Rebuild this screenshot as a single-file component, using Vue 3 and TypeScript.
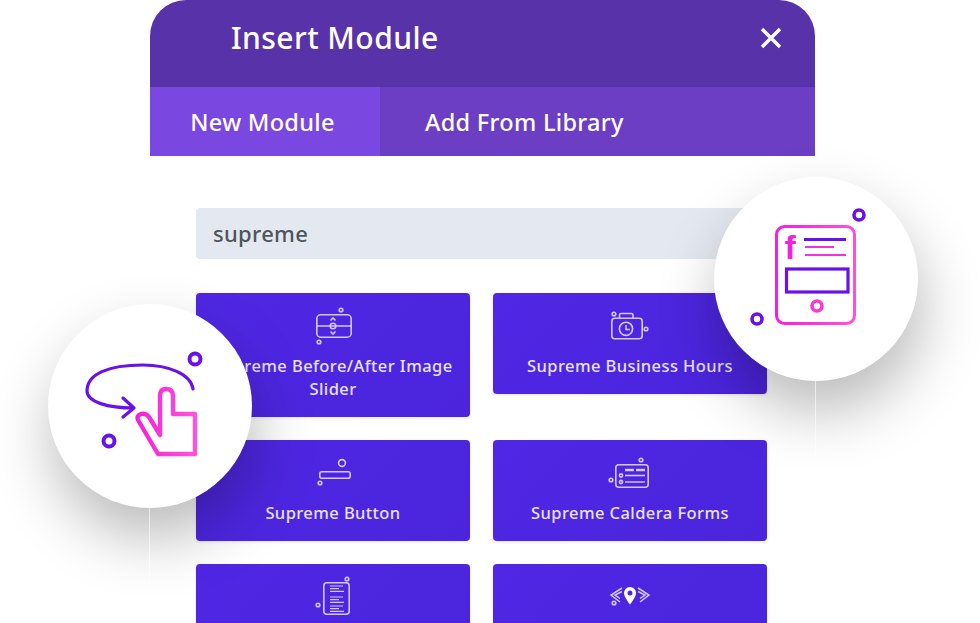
<script setup lang="ts">
interface ModuleCard {
  name: string;
  icon: string;
}

// the last row is cut by the bottom of the picture, so no label shows there
const modules: ModuleCard[] = [
  { name: 'Supreme Before/After Image Slider', icon: 'slider' },
  { name: 'Supreme Business Hours', icon: 'hours' },
  { name: 'Supreme Button', icon: 'button' },
  { name: 'Supreme Caldera Forms', icon: 'forms' },
  { name: '', icon: 'doc' },
  { name: '', icon: 'code' },
];
</script>

<template>
  <div class="page">
    <div class="window">
      <header class="head">
        <h1 class="title">Insert Module</h1>
        <svg class="close" width="24" height="24" viewBox="0 0 24 24">
          <path d="M3 3L21 21M21 3L3 21" stroke="#fff" stroke-width="3.400" fill="none" />
        </svg>
      </header>
      <nav class="tabs">
        <div class="tab active">New Module</div>
        <div class="tab">Add From Library</div>
      </nav>
      <div class="content">
        <div class="search">supreme</div>
        <div class="grid">
          <div v-for="m in modules" :key="m.icon" class="card">
            <svg class="ico" width="60" height="46" viewBox="0 0 60 46" fill="none" stroke="#d4c8fa" stroke-width="1.600">
              <template v-if="m.icon === 'slider'">
                <circle cx="38" cy="4" r="1.800" />
                <circle cx="16" cy="36" r="1.800" />
                <rect x="13.800" y="8.800" width="34.400" height="22.400" rx="4" />
                <path d="M14 20H48" />
                <path d="M27.500 14.500l2.500-2.500 2.500 2.500M27.500 25.500l2.500 2.500 2.500-2.500" />
                <circle cx="30" cy="20" r="2.800" />
              </template>
              <template v-else-if="m.icon === 'hours'">
                <circle cx="14" cy="8" r="1.800" />
                <circle cx="46" cy="23" r="1.800" />
                <path d="M19.500 12V9A1.500 1.500 0 0 1 21 7.500H31.500A1.500 1.500 0 0 1 33 9V12" />
                <rect x="11.800" y="12.300" width="30.400" height="20.400" rx="3" />
                <circle cx="26" cy="22.800" r="6.600" />
                <path d="M26 19V23.500H30" />
              </template>
              <template v-else-if="m.icon === 'button'">
                <circle cx="39" cy="10" r="3.400" />
                <rect x="16.800" y="18.800" width="30.400" height="6.400" rx="2" />
                <circle cx="17" cy="30" r="1.800" />
              </template>
              <template v-else-if="m.icon === 'forms'">
                <circle cx="41" cy="7" r="1.800" />
                <circle cx="11" cy="27" r="1.800" />
                <rect x="15.800" y="11.800" width="32.400" height="22.400" rx="3" />
                <path d="M25 17H34M36 17H45" stroke-width="2.400" />
                <circle cx="21" cy="22.500" r="1.600" />
                <circle cx="21" cy="29" r="1.600" />
                <path d="M25 22.500H45" />
                <path d="M25 29H45" stroke-width="2" stroke-opacity=".7" />
              </template>
              <template v-else-if="m.icon === 'doc'">
                <circle cx="44" cy="2" r="1.800" />
                <circle cx="15" cy="28" r="1.800" />
                <rect x="20.800" y="5.800" width="25.400" height="31.400" rx="3" />
                <path d="M27 9H40M27 11.700H36M27 14.400H41M27 20H40M27 22.700H36M27 25.400H41M27 29H40M27 31.700H36M27 34.400H41" stroke-width="1.200" />
              </template>
              <template v-else>
                <circle cx="14" cy="26" r="1.800" />
                <path d="M22 11L11 18L20 25M22 14.500L15 18L20 21.500" stroke-width="1.500" />
                <path d="M38 11L49 18L40 25M38 14.500L45 18L40 21.500" stroke-width="1.500" />
                <path fill="#fff" stroke="none" fill-rule="evenodd" d="M30 10a6 6 0 0 1 6 6c0 3.500-3.500 8-6 11.500c-2.500-3.500-6-8-6-11.500a6 6 0 0 1 6-6zm0 3.500a2.500 2.500 0 1 0 0 5a2.500 2.500 0 0 0 0-5z" />
              </template>
            </svg>
            <div v-if="m.name" class="label">{{ m.name }}</div>
          </div>
        </div>
      </div>
    </div>

    <div class="bubble bubble-right">
      <svg width="204" height="204" viewBox="0 0 204 204" fill="none">
        <defs>
          <linearGradient id="pinkA" x1="0" y1="0" x2="1" y2="0">
            <stop offset="0" stop-color="#f51fe0" />
            <stop offset="1" stop-color="#ff50d8" />
          </linearGradient>
        </defs>
        <circle cx="145" cy="38" r="5" stroke="#6a10ea" stroke-width="3.600" />
        <circle cx="43" cy="142" r="5" stroke="#6a10ea" stroke-width="3.600" />
        <rect x="62.500" y="49.500" width="78" height="97" rx="8" stroke="url(#pinkA)" stroke-width="3" />
        <text x="70.500" y="82" class="fb">f</text>
        <path d="M90 62.500H132" stroke="#6a10ea" stroke-width="3" />
        <path d="M91 70H120M91 78H132" stroke="#f530e0" stroke-width="2.200" />
        <rect x="72.500" y="92" width="61.500" height="23" stroke="#6a10ea" stroke-width="3.200" />
        <circle cx="103" cy="129" r="5" stroke="#f838dc" stroke-width="3.600" />
      </svg>
    </div>

    <div class="bubble bubble-left">
      <svg width="204" height="204" viewBox="0 0 204 204" fill="none">
        <defs>
          <linearGradient id="pinkB" gradientUnits="userSpaceOnUse" x1="88" y1="0" x2="149" y2="0">
            <stop offset="0" stop-color="#f51fd8" />
            <stop offset="1" stop-color="#ff55d8" />
          </linearGradient>
        </defs>
        <circle cx="147" cy="55" r="5.500" stroke="#6a10ea" stroke-width="4" />
        <circle cx="61" cy="137" r="5.500" stroke="#6a10ea" stroke-width="4" />
        <path d="M145 85C143 70 120 61 95 61C60 61 39 70 39 87C39 98 60 104 86 104M75 94L86 104L75 113" stroke="#6a10ea" stroke-width="3.200" stroke-linecap="round" stroke-linejoin="round" />
        <path d="M112 131V92Q112 85 118 85Q125 85 125 92V110H147V150H110L90 116Q88 112 93 110Q98 109 101 113Z" stroke="url(#pinkB)" stroke-width="4.400" stroke-linejoin="round" />
      </svg>
    </div>

    <!-- window edge showing through the shadows -->
    <i class="seam seam-right"></i>
    <i class="seam seam-left"></i>
  </div>
</template>

<style>
html,
body {
  margin: 0;
  background: #fff;
}
</style>

<style scoped>
.page {
  position: relative;
  width: 980px;
  height: 623px;
  overflow: hidden;
  background: #fff;
  font-family: "Noto Sans", "Open Sans", sans-serif;
}

.window {
  width: 665px;
  margin-left: 150px;
}

.head {
  height: 87px;
  background: #5732a8;
  border-radius: 36px 36px 0 0;
  display: flex;
  align-items: flex-start;
  justify-content: space-between;
  padding: 16px 32px 0 81px;
  box-sizing: border-box;
  color: #fff;
}

.title {
  margin: 0;
  font-size: 30px;
  line-height: 44px;
  font-weight: 500;
  letter-spacing: 0.45px;
}

.close {
  margin-top: 10px;
}

.tabs {
  display: flex;
  height: 69px;
  background: #6c3ec4;
  color: #fff;
  font-size: 23.500px;
  font-weight: 500;
}

.tab {
  padding: 0 45px;
  line-height: 71px;
  letter-spacing: 0.3px;
}

.tab.active {
  width: 230px;
  box-sizing: border-box;
  padding: 0 5px 0 0;
  text-align: center;
  background: #7a47e0;
}

.content {
  padding: 52px 48px 0 46px;
}

.search {
  height: 51px;
  line-height: 51px;
  background: #e4e9f1;
  border-radius: 4px;
  padding-left: 17px;
  font-size: 22px;
  font-weight: 500;
  color: #4f555d;
  letter-spacing: 0.3px;
}

.grid {
  display: grid;
  grid-template-columns: 274px 274px;
  column-gap: 23px;
  row-gap: 23px;
  align-items: start;
  margin-top: 34px;
}

.card {
  background: linear-gradient(135deg, #4f27e4, #4b24dc);
  border-radius: 4px;
  padding: 13px 12px 17px;
  min-height: 101px;
  box-sizing: border-box;
  text-align: center;
  color: #e8e2fb;
  font-size: 16.500px;
  line-height: 23px;
  font-weight: 500;
  box-shadow: 0 1px 3px rgba(40, 20, 110, 0.12);
}

.ico {
  display: block;
  margin: 0 auto 2px;
  overflow: visible;
}

.label {
  letter-spacing: 0.42px;
}

.bubble {
  position: absolute;
  width: 204px;
  height: 204px;
  border-radius: 50%;
  background: #fff;
  box-shadow: 4px 30px 60px rgba(0, 0, 0, 0.27);
}

.bubble svg {
  display: block;
}

.bubble-right {
  left: 714px;
  top: 177px;
}

.bubble-left {
  left: 48px;
  top: 304px;
}

.seam {
  position: absolute;
  width: 1px;
  background: rgba(255, 255, 255, 0.6);
}

.seam-right {
  left: 815px;
  top: 381px;
  height: 100px;
}

.seam-left {
  left: 149px;
  top: 508px;
  height: 115px;
}

.fb {
  font-family: "Liberation Sans", sans-serif;
  font-weight: 700;
  font-size: 34px;
  fill: #f51fe0;
}
</style>
